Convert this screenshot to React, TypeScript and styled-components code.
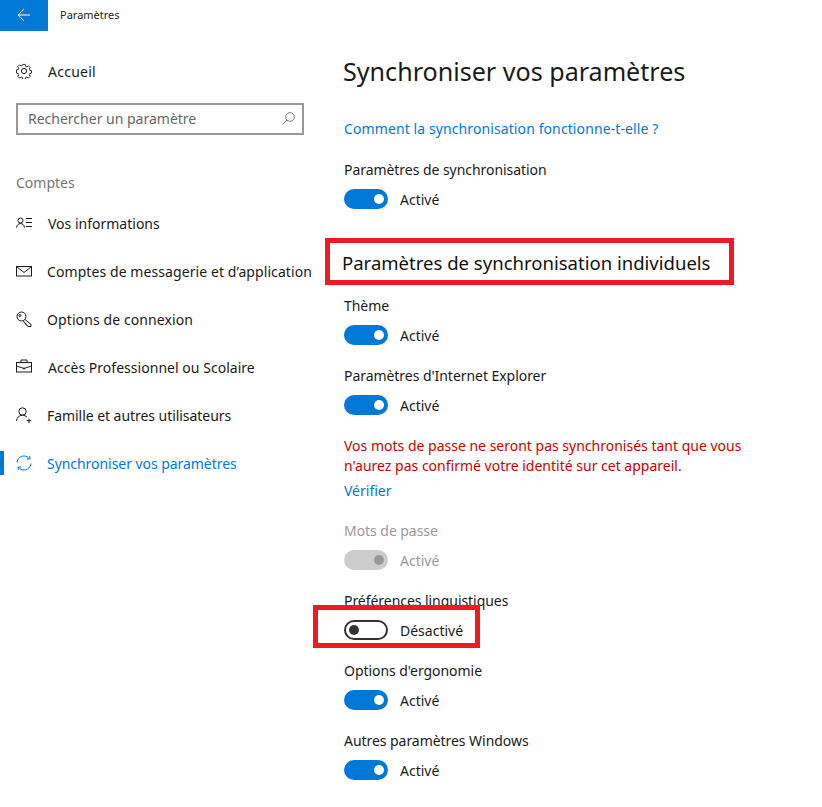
import React from "react";
import styled, { createGlobalStyle } from "styled-components";

const Global = createGlobalStyle`
  html, body { margin: 0; padding: 0; background: #fff; }
  body { width: 822px; height: 807px; overflow: hidden; font-family: "Noto Sans", "Open Sans", sans-serif; color: #1a1a1a; }
  * { box-sizing: border-box; }
`;

const Page = styled.div`
  display: grid;
  grid-template-columns: 344px 1fr;
  width: 822px;
  height: 807px;
`;
const Sidebar = styled.aside`
  display: flex;
  flex-direction: column;
`;
const TitleBar = styled.header`
  display: flex;
  align-items: center;
  height: 31px;
  gap: 12px;
`;
const BackButton = styled.div`
  width: 48px;
  height: 31px;
  background: #0078d7;
  display: flex;
  align-items: center;
  justify-content: center;
  padding-bottom: 2px;
`;
const AppTitle = styled.span`
  font-size: 11px;
  color: #222;
  padding-bottom: 2px;
`;
const NavItem = styled.div<{ $active?: boolean; $gap?: number; $track?: number }>`
  position: relative;
  display: flex;
  align-items: center;
  height: 48px;
  padding-left: 16px;
  gap: ${(p) => p.$gap ?? 15}px;
  font-size: 14px;
  white-space: nowrap;
  color: ${(p) => (p.$active ? "#0078d7" : "#1a1a1a")};
  letter-spacing: ${(p) => p.$track ?? 0}px;
  svg { flex: none; }
`;
const ActiveMark = styled.span`
  position: absolute;
  left: 0;
  top: 12px;
  width: 4px;
  height: 24px;
  background: #0078d7;
`;
const HomeItem = styled(NavItem)`
  margin-top: 16px;
`;
const SearchBox = styled.div`
  display: flex;
  align-items: center;
  justify-content: space-between;
  width: 288px;
  height: 32px;
  margin: 8px 0 0 16px;
  padding: 0 7px 2px 10px;
  border: 2px solid #999;
  font-size: 14px;
  color: #666;
`;
const SectionLabel = styled.div`
  margin: 38px 0 6px 16px;
  line-height: 20px;
  font-size: 14px;
  color: #767676;
`;
const Main = styled.main`
  display: flex;
  flex-direction: column;
  padding-top: 31px;
`;
const PageTitle = styled.h1`
  margin: 20px 0 0 -1px;
  line-height: 40px;
  font-size: 25.1px;
  font-weight: 400;
  color: #1a1a1a;
  white-space: nowrap;
`;
const LinkText = styled.a<{ $top: number; $track?: number }>`
  display: block;
  margin-top: ${(p) => p.$top}px;
  line-height: 20px;
  font-size: 14px;
  letter-spacing: ${(p) => p.$track ?? 0}px;
  color: #0078d7;
`;
const SubHeading = styled.h2`
  position: relative;
  margin: 39px 0 17px -2px;
  line-height: 30px;
  font-size: 18.55px;
  font-weight: 400;
  color: #111;
  white-space: nowrap;
`;
const HeadingFrame = styled.span`
  position: absolute;
  left: -17px;
  top: -10px;
  width: 409px;
  height: 47px;
  border: 5px solid #ed1c24;
`;
const Setting = styled.section<{ $top?: number }>`
  margin-top: ${(p) => p.$top ?? 20}px;
`;
const SettingLabel = styled.div<{ $off?: boolean }>`
  line-height: 22px;
  font-size: 14px;
  letter-spacing: -0.05px;
  color: ${(p) => (p.$off ? "#999" : "#1a1a1a")};
`;
const ToggleRow = styled.div<{ $off?: boolean }>`
  position: relative;
  display: flex;
  align-items: center;
  gap: 12px;
  margin-top: 8px;
  height: 20px;
  font-size: 14px;
  color: ${(p) => (p.$off ? "#999" : "#1a1a1a")};
`;
const Track = styled.span<{ $state: "on" | "off" | "disabled" }>`
  display: flex;
  align-items: center;
  justify-content: ${(p) => (p.$state === "off" ? "flex-start" : "flex-end")};
  width: 44px;
  height: 20px;
  padding: 0 4px;
  border-radius: 10px;
  border: ${(p) => (p.$state === "off" ? "2px solid #333" : "none")};
  padding-left: ${(p) => (p.$state === "off" ? "3px" : "4px")};
  background: ${(p) => (p.$state === "on" ? "#0078d7" : p.$state === "disabled" ? "#ccc" : "#fff")};
`;
const Knob = styled.span<{ $state: "on" | "off" | "disabled" }>`
  width: 10px;
  height: 10px;
  border-radius: 50%;
  background: ${(p) => (p.$state === "on" ? "#fff" : p.$state === "disabled" ? "#999" : "#333")};
`;
const ToggleFrame = styled.span`
  position: absolute;
  left: -31px;
  top: -15px;
  width: 167px;
  height: 43px;
  border: 5px solid #ed1c24;
`;
const Warning = styled.p`
  margin: 21px 0 0;
  width: 440px;
  line-height: 20px;
  font-size: 14px;
  color: #c00;
`;

const Ic = ({ children, w = 16, h = 16, c = "#1a1a1a" }: { children: React.ReactNode; w?: number; h?: number; c?: string }) => (
  <svg width={w} height={h} viewBox={`0 0 ${w} ${h}`} fill="none" stroke={c} strokeWidth="1">
    {children}
  </svg>
);

const GearIcon = () => (
  <Ic>
    <circle cx="8" cy="8" r="2.6" />
    <path d="M6.6.7h2.8l.4 2 1.4.6 1.7-1.100 2 2-1.100 1.700.6 1.400 2 .4v2.600l-2 .4-.6 1.400 1.100 1.700-2 2-1.700-1.100-1.400.6-.4 2H6.600l-.4-2-1.400-.6-1.700 1.100-2-2 1.100-1.700-.6-1.400-2-.4V6.700l2-.4.6-1.400-1.100-1.700 2-2 1.700 1.100 1.400-.6z" transform="translate(.8 .8) scale(.9)" />
  </Ic>
);
const InfoIcon = () => (
  <Ic>
    <circle cx="4.500" cy="5.500" r="2.500" />
    <path d="M.5 12.500c.3-2.400 2-4 4-4s3.700 1.600 4 4M10 3.500h6M10 7.500h6M10 11.500h6" />
  </Ic>
);
const MailIcon = () => (
  <Ic>
    <rect x=".5" y="3.500" width="15" height="9.500" />
    <path d="M.8 3.800 8 9.500l7.200-5.700" />
  </Ic>
);
const KeyIcon = () => (
  <Ic>
    <circle cx="5.500" cy="5.500" r="4.500" />
    <circle cx="4" cy="4.500" r="1" />
    <path d="m9 8.500 6 5v2h-3l-1-1.500h-1v-1.500H9L7.500 10" />
  </Ic>
);
const WorkIcon = () => (
  <Ic>
    <rect x=".5" y="3.500" width="15" height="9.500" />
    <path d="M5 3.500v-2.500h6v2.500M.5 7 8 9.500 15.500 7M8 8.500v2" />
  </Ic>
);
const FamilyIcon = () => (
  <Ic>
    <circle cx="6.500" cy="4.500" r="3.700" />
    <path d="M.5 14c.3-3.500 2.700-5.800 6-5.800 1.800 0 3.400.8 4.500 2M13 11.500v4.500M10.700 13.700h4.600" />
  </Ic>
);
const SyncIcon = () => (
  <Ic c="#0078d7">
    <path d="M1 7.500C1.300 3.800 4.300 1 8 1c2.200 0 4.200 1 5.500 2.700M13.800 1v3h-3M15 8.500c-.3 3.700-3.300 6.500-7 6.500-2.200 0-4.200-1-5.500-2.700M2.200 15v-3h3" />
  </Ic>
);
const BackIcon = () => (
  <Ic w={14} h={14} c="#fff">
    <path d="M13 7H1M7 1 1 7l6 6" />
  </Ic>
);
const SearchIcon = () => (
  <Ic w={13} h={13} c="#777">
    <circle cx="8" cy="5" r="4.300" />
    <path d="M5 8 .7 12.300" />
  </Ic>
);

const Toggle = ({ state = "on", framed }: { state?: "on" | "off" | "disabled"; framed?: boolean }) => (
  <ToggleRow $off={state === "disabled"}>
    <Track $state={state}>
      <Knob $state={state} />
    </Track>
    {state === "off" ? "Désactivé" : "Activé"}
    {framed && <ToggleFrame />}
  </ToggleRow>
);

const navItems = [
  { label: "Vos informations", icon: <InfoIcon />, gap: 16, track: 0 },
  { label: "Comptes de messagerie et d’application", icon: <MailIcon />, gap: 15, track: 0.08 },
  { label: "Options de connexion", icon: <KeyIcon />, gap: 15, track: 0.1 },
  { label: "Accès Professionnel ou Scolaire", icon: <WorkIcon />, gap: 16, track: 0.03 },
  { label: "Famille et autres utilisateurs", icon: <FamilyIcon />, gap: 15, track: -0.05 },
];

export default function App() {
  return (
    <Page>
      <Global />
      <Sidebar>
        <TitleBar>
          <BackButton>
            <BackIcon />
          </BackButton>
          <AppTitle>Paramètres</AppTitle>
        </TitleBar>
        <HomeItem $gap={16} $track={0.25}>
          <GearIcon />
          Accueil
        </HomeItem>
        <SearchBox>
          Rechercher un paramètre
          <SearchIcon />
        </SearchBox>
        <SectionLabel>Comptes</SectionLabel>
        {navItems.map((n) => (
          <NavItem key={n.label} $gap={n.gap} $track={n.track}>
            {n.icon}
            {n.label}
          </NavItem>
        ))}
        <NavItem $active $track={-0.05}>
          <ActiveMark />
          <SyncIcon />
          Synchroniser vos paramètres
        </NavItem>
      </Sidebar>
      <Main>
        <PageTitle>Synchroniser vos paramètres</PageTitle>
        <LinkText $top={28} $track={0.1}>Comment la synchronisation fonctionne-t-elle ?</LinkText>
        <Setting>
          <SettingLabel>Paramètres de synchronisation</SettingLabel>
          <Toggle />
        </Setting>
        <SubHeading>
          Paramètres de synchronisation individuels
          <HeadingFrame />
        </SubHeading>
        <Setting $top={0}>
          <SettingLabel>Thème</SettingLabel>
          <Toggle />
        </Setting>
        <Setting>
          <SettingLabel>Paramètres d'Internet Explorer</SettingLabel>
          <Toggle />
        </Setting>
        <Warning>
          Vos mots de passe ne seront pas synchronisés tant que vous
          <br />
          n'aurez pas confirmé votre identité sur cet appareil.
        </Warning>
        <LinkText $top={5}>Vérifier</LinkText>
        <Setting $top={19}>
          <SettingLabel $off>Mots de passe</SettingLabel>
          <Toggle state="disabled" />
        </Setting>
        <Setting>
          <SettingLabel>Préférences linguistiques</SettingLabel>
          <Toggle state="off" framed />
        </Setting>
        <Setting>
          <SettingLabel>Options d'ergonomie</SettingLabel>
          <Toggle />
        </Setting>
        <Setting>
          <SettingLabel>Autres paramètres Windows</SettingLabel>
          <Toggle />
        </Setting>
      </Main>
    </Page>
  );
}
